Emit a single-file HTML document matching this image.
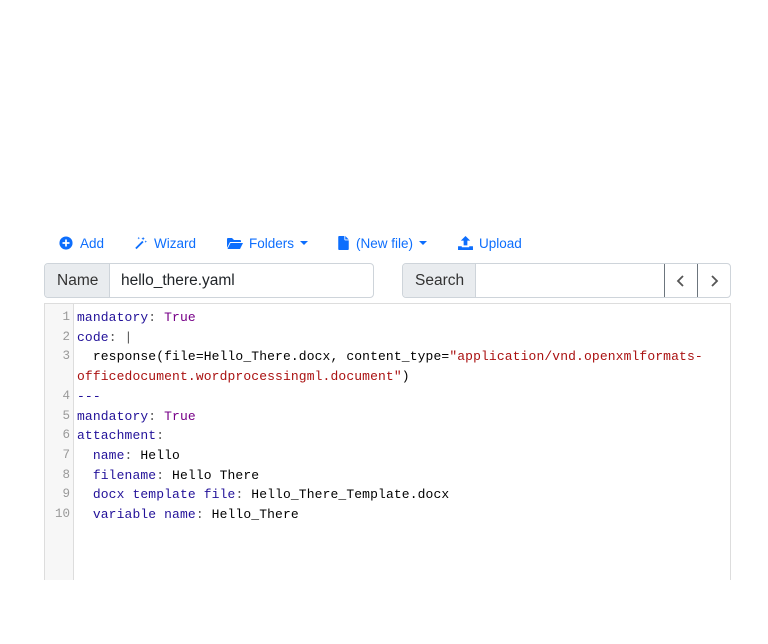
<!DOCTYPE html>
<html><head><meta charset="utf-8">
<style>
*{box-sizing:border-box;margin:0;padding:0}
html,body{width:768px;height:644px;background:#fff;overflow:hidden;font-family:"Liberation Sans",Arial,sans-serif}
.tb{position:absolute;top:234px;height:18px;color:#0d6efd;font-size:13.5px;display:flex;align-items:center;gap:6px}
.tb svg{fill:#0d6efd}
.caret{display:inline-block;width:0;height:0;border-left:4px solid transparent;border-right:4px solid transparent;border-top:4px solid #0d6efd;margin-left:0px}
.grp{position:absolute;top:263px;height:35px;border:1px solid #ced4da;border-radius:4px;display:flex;overflow:hidden;font-size:15.5px;color:#212529}
.lab{background:#e9ecef;border-right:1px solid #ced4da;display:flex;align-items:center;padding:0 12px;color:#333}
.val{display:flex;align-items:center;padding:0 11px}
.btn{width:33px;border-left:1px solid #6c757d;display:flex;align-items:center;justify-content:center}
.ed{position:absolute;left:44px;top:303px;width:687px;height:277px;border:1px solid #ddd;border-bottom:none;background:#fff}
.gut{position:absolute;left:0;top:0;width:29px;height:100%;background:#f7f7f7;border-right:1px solid #ddd}
.ln{position:absolute;left:0;width:25px;text-align:right;color:#999;font-family:"Liberation Mono",monospace;font-size:12.5px}
.cl{position:absolute;left:32px;font-family:"Liberation Mono",monospace;font-size:13px;letter-spacing:0.12px;color:#000;white-space:pre}
.k{color:#219}.t{color:#708}.s{color:#a11}.p{color:#555}
</style></head><body>
<div class="tb" style="left:59px"><svg width="14" height="14" viewBox="0 0 16 16"><circle cx="8" cy="8" r="7.5"/><path d="M7 4h2v3h3v2H9v3H7V9H4V7h3z" fill="#fff"/></svg><span style="margin-left:1px">Add</span></div>
<div class="tb" style="left:133px"><svg width="15" height="14" viewBox="0 0 16 16"><path d="M2 13.5l8-8 1.5 1.5-8 8z"/><path d="M11 1l.6 1.4L13 3l-1.4.6L11 5l-.6-1.4L9 3l1.4-.6zM14 5l.4 1 1 .4-1 .4-.4 1-.4-1-1-.4 1-.4zM6 1l.4 1 1 .4-1 .4-.4 1-.4-1-1-.4 1-.4z"/></svg><span>Wizard</span></div>
<div class="tb" style="left:227px"><svg width="16" height="13" viewBox="0 0 16 13"><path d="M0 2a1 1 0 011-1h4l2 2h6a1 1 0 011 1v1H3L0 11z"/><path d="M3.5 6H16l-3 6H0.5z"/></svg><span style="margin-left:0px">Folders</span><span class="caret"></span></div>
<div class="tb" style="left:338px"><svg width="11" height="14" viewBox="0 0 12 16"><path d="M0 1a1 1 0 011-1h6v4a1 1 0 001 1h4v10a1 1 0 01-1 1H1a1 1 0 01-1-1z"/><path d="M8 0l4 4H8z"/></svg><span style="margin-left:1px">(New file)</span><span class="caret"></span></div>
<div class="tb" style="left:458px"><svg width="15" height="14" viewBox="0 0 16 15"><path d="M8 0l5 5H10v5H6V5H3z"/><path d="M0 11h4v1h8v-1h4v4H0z"/></svg><span style="margin-left:0px">Upload</span></div>

<div class="grp" style="left:44px;width:330px"><div class="lab" style="width:65px">Name</div><div class="val">hello_there.yaml</div></div>
<div class="grp" style="left:402px;width:329px"><div class="lab" style="width:73px">Search</div><div style="flex:1"></div><div class="btn" style="border-left:1px solid #6c757d"><svg width="10" height="14" viewBox="0 0 10 14"><path d="M7 2L2 7l5 5" stroke="#555" stroke-width="1.8" fill="none"/></svg></div><div class="btn"><svg width="10" height="14" viewBox="0 0 10 14"><path d="M3 2l5 5-5 5" stroke="#555" stroke-width="1.8" fill="none"/></svg></div></div>

<div class="ed"><div class="gut"></div>
<div class="ln" style="top:6px">1</div><div class="cl" style="top:6px"><span class="k">mandatory</span><span class="p">:</span> <span class="t">True</span></div>
<div class="ln" style="top:26px">2</div><div class="cl" style="top:26px"><span class="k">code</span><span class="p">:</span> <span class="p">|</span></div>
<div class="ln" style="top:45px">3</div><div class="cl" style="top:45px">  response(file=Hello_There.docx, content_type=<span class="s">"application/vnd.openxmlformats-</span></div>
<div class="cl" style="top:65px"><span class="s">officedocument.wordprocessingml.document"</span>)</div>
<div class="ln" style="top:85px">4</div><div class="cl" style="top:85px"><span class="k">---</span></div>
<div class="ln" style="top:105px">5</div><div class="cl" style="top:105px"><span class="k">mandatory</span><span class="p">:</span> <span class="t">True</span></div>
<div class="ln" style="top:124px">6</div><div class="cl" style="top:124px"><span class="k">attachment</span><span class="p">:</span></div>
<div class="ln" style="top:144px">7</div><div class="cl" style="top:144px">  <span class="k">name</span><span class="p">:</span> Hello</div>
<div class="ln" style="top:164px">8</div><div class="cl" style="top:164px">  <span class="k">filename</span><span class="p">:</span> Hello There</div>
<div class="ln" style="top:183px">9</div><div class="cl" style="top:183px">  <span class="k">docx template file</span><span class="p">:</span> Hello_There_Template.docx</div>
<div class="ln" style="top:203px">10</div><div class="cl" style="top:203px">  <span class="k">variable name</span><span class="p">:</span> Hello_There</div>
</div>
</body></html>
